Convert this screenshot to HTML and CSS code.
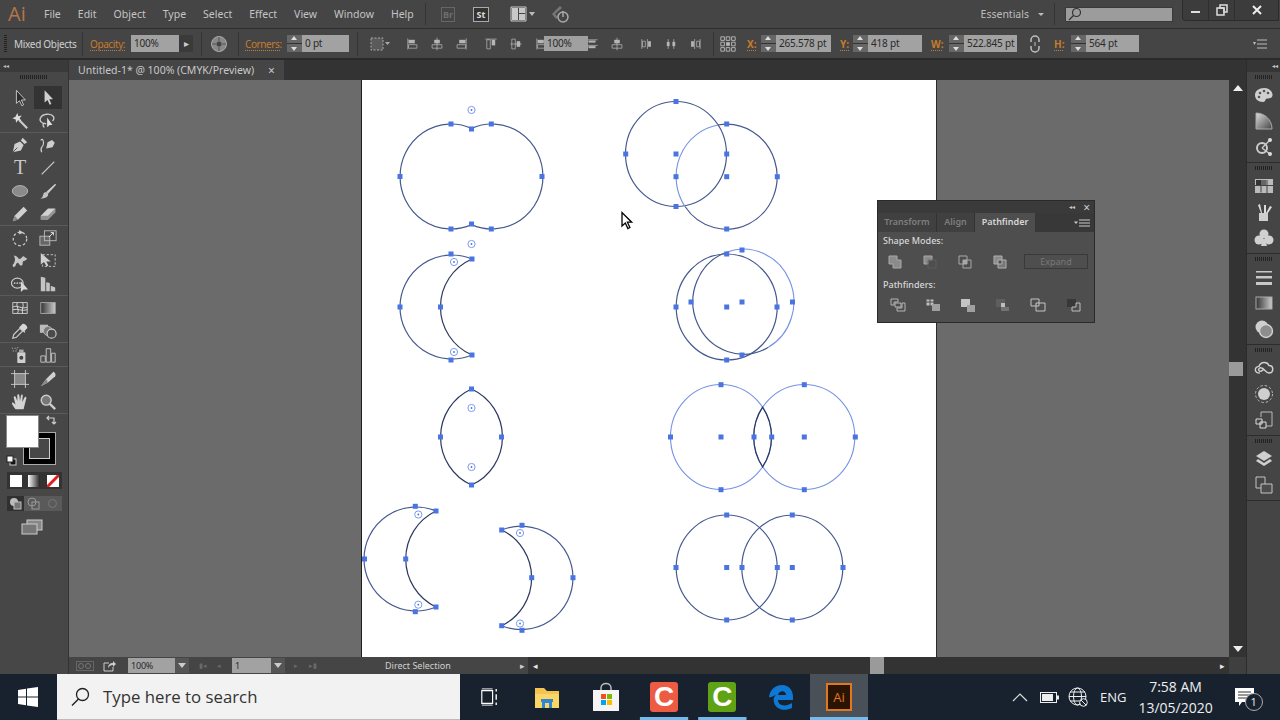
FILE: index.html
```html
<!DOCTYPE html>
<html lang="en">
<head>
    <meta charset="UTF-8">
    <title>Illustrator - Pathfinder</title>
    <link rel="stylesheet" href="styles.css">
</head>
<body>
<!-- icon sprite -->
<svg class="sprite" xmlns="http://www.w3.org/2000/svg">
    <symbol id="t-sel" viewBox="0 0 20 20"><path d="M6 1.500V16l3.400-3 2.600 5.600 2-1-2.500-5.400H16z" fill="#2c2c2c" stroke="#cfcfcf"/></symbol>
    <symbol id="t-dsel" viewBox="0 0 20 20"><path d="M6 1.500V16l3.400-3 2.600 5.600 2-1-2.500-5.400H16z" fill="#cfcfcf"/></symbol>
    <symbol id="t-wand" viewBox="0 0 20 20"><path d="M9 9l9 9" stroke="#ccc" stroke-width="2.400"/><path d="M7 1l1.200 3.600L12 4 9.600 7l2 3-3.600-1L5.600 12 5.200 8.200 1.500 7l3.500-1.600z" fill="#ddd"/></symbol>
    <symbol id="t-lasso" viewBox="0 0 20 20"><path d="M8 13C2 13 0 9 2 6c2-4 11-5 14-1 1 2 0 4-1 5" fill="none" stroke="#ccc" stroke-width="1.500"/><path d="M6 12c-2 1-2 4 0 5" fill="none" stroke="#ccc" stroke-width="1.500"/><path d="M9 6v11l3-2.500 3 0z" fill="#ddd"/></symbol>
    <symbol id="t-pen" viewBox="0 0 20 20"><path d="M2 18l2-9 6-3 4 4-3 6zM11 5l2-3 5 5-3 2z" fill="#cfcfcf"/><path d="M2 18l5-5" stroke="#444"/></symbol>
    <symbol id="t-curve" viewBox="0 0 20 20"><path d="M7 17l1.500-7 5-2.500 3 3-2.500 5z" fill="#cfcfcf" transform="translate(1 -3)"/><path d="M3 18C0 12 5 13 5 8s-2-5-3-3" fill="none" stroke="#ccc" stroke-width="1.300"/></symbol>
    <symbol id="t-line" viewBox="0 0 20 20"><path d="M3 17L17 3" stroke="#ccc" stroke-width="1.300"/></symbol>
    <symbol id="t-ellipse" viewBox="0 0 20 20"><ellipse cx="10" cy="10" rx="8.500" ry="6" fill="#8b8b8b" stroke="#bbb"/></symbol>
    <symbol id="t-brush" viewBox="0 0 20 20"><path d="M8 11L18 2l1 1-9 10z" fill="#d0d0d0"/><path d="M1 18c3 0 3-2 4-5 1-2 4-2 5 0 1 3-3 6-9 5z" fill="#c4c4c4"/></symbol>
    <symbol id="t-pencil" viewBox="0 0 20 20"><path d="M2 18l2-6L14 2l4 4L8 16z" fill="#cfcfcf"/><path d="M2 18l2-6 4 4z" fill="#8a8a8a"/></symbol>
    <symbol id="t-eraser" viewBox="0 0 20 20"><path d="M2 12l8-8h8v4l-8 8H2z" fill="#d2d2d2"/><path d="M2 12h8v4H2zM10 12l8-8v4l-8 8z" fill="#929292"/></symbol>
    <symbol id="t-rotate" viewBox="0 0 20 20"><circle cx="10" cy="11" r="7.500" fill="none" stroke="#ccc" stroke-width="1.400" stroke-dasharray="3 2.400"/><path d="M9 1l5 3-5 2z" fill="#ccc"/></symbol>
    <symbol id="t-scale" viewBox="0 0 20 20"><rect x="1" y="8" width="11" height="10" fill="#666" stroke="#bbb"/><rect x="6" y="2" width="13" height="11" fill="none" stroke="#bbb"/><path d="M11 9l5-5m-3 0h3v3" fill="none" stroke="#eee"/></symbol>
    <symbol id="t-warp" viewBox="0 0 20 20"><path d="M3 17c3-1 2-4 4-5s2 4 5 3c2-1 0-4 2-5 2 0 3-1 4-3-3 0-3-3-5-2-2 2-3 4-5 2-1-2-3-3-5-3 2 3 2 6 0 9-2 1-1 3 0 4z" fill="#c6c6c6"/></symbol>
    <symbol id="t-free" viewBox="0 0 20 20"><path d="M4 3h14v13H4z" fill="none" stroke="#ccc" stroke-dasharray="2.500 2"/><path d="M2 1v13l3.500-3 3 5 2-1-2.500-4.500H13z" fill="#d0d0d0"/></symbol>
    <symbol id="t-builder" viewBox="0 0 20 20"><ellipse cx="7" cy="9" rx="6.500" ry="5.500" fill="none" stroke="#ccc" stroke-width="1.300"/><circle cx="4" cy="9" r="1" fill="#ccc"/><circle cx="7" cy="9" r="1" fill="#ccc"/><circle cx="10" cy="9" r="1" fill="#ccc"/><path d="M11 7v12l3-3h5z" fill="#d8d8d8"/></symbol>
    <symbol id="t-persp" viewBox="0 0 20 20"><path d="M2 2l5 1v15H2zM8 8l4 1v9H8zM13 12l5 2v4h-5z" fill="#c4c4c4"/></symbol>
    <symbol id="t-mesh" viewBox="0 0 20 20"><rect x="2" y="4" width="16" height="12" fill="#4a4a4a" stroke="#d0d0d0"/><path d="M2 9c5-3 10 3 16 0M2 12c5-2 10 2 16 0M7 4c-2 4 3 8 0 12M13 4c2 4-2 8 0 12" fill="none" stroke="#e0e0e0"/></symbol>
    <symbol id="t-grad" viewBox="0 0 20 20"><defs><linearGradient id="g-tool"><stop offset="0" stop-color="#333"/><stop offset="1" stop-color="#ccc"/></linearGradient></defs><rect x="2" y="4" width="16" height="12" fill="url(#g-tool)" stroke="#aaa"/></symbol>
    <symbol id="t-drop" viewBox="0 0 20 20"><path d="M2 18l1-4 7-7 3 3-7 7z" fill="none" stroke="#ccc" stroke-width="1.300"/><path d="M10 5l3-3c2-1 6 3 5 5l-3 3 1 1-1 1-6-6 1-1z" fill="#d6d6d6"/></symbol>
    <symbol id="t-blend" viewBox="0 0 20 20"><rect x="1" y="3" width="9" height="9" fill="#bbb"/><circle cx="10" cy="10" r="5" fill="#777" stroke="#bbb"/><circle cx="14" cy="13" r="5" fill="#4b4b4b" stroke="#ccc" stroke-width="1.300"/></symbol>
    <symbol id="t-spray" viewBox="0 0 20 20"><rect x="7" y="7" width="9" height="12" rx="1" fill="#cfcfcf"/><rect x="9" y="4" width="5" height="3" fill="#aaa"/><circle cx="11.500" cy="13" r="2.200" fill="#444"/><path d="M1 2h1v1H1zM4 2h1v1H4zM6 3h1v1H6zM2 5h1v1H2zM5 5h1v1H5zM7 1h1v1H7z" fill="#ccc"/></symbol>
    <symbol id="t-graph" viewBox="0 0 20 20"><path d="M2 11h5v7H2zM8 3h5v15H8zM14 8h4v10h-4z" fill="#4d4d4d" stroke="#c8c8c8"/></symbol>
    <symbol id="t-artboard" viewBox="0 0 20 20"><rect x="4" y="4" width="12" height="12" fill="#888"/><path d="M0 4h20M0 16h20M4 0v20M16 0v20" stroke="#ccc"/></symbol>
    <symbol id="t-slice" viewBox="0 0 20 20"><path d="M2 18l6-8 8-8c2 1 3 3 2 5l-8 7z" fill="#d0d0d0"/><path d="M2 18l6-8 2 4z" fill="#888"/></symbol>
    <symbol id="t-hand" viewBox="0 0 20 20"><path d="M5 18C3 15 1 13 1 11c1-1 2 0 4 2L3 5c0-2 2-2 2.500 0L7 9 7 3c0-2 2-2 2.300 0L10 9l1-6c.5-2 2.500-1.500 2 .5L12.500 10l2.500-5c1-1.500 2.500-.5 2 1l-2 8-1 4z" fill="#d4d4d4"/></symbol>
    <symbol id="t-zoom" viewBox="0 0 20 20"><circle cx="8" cy="8" r="5.500" fill="#777" stroke="#ccc" stroke-width="1.600"/><path d="M12 12l6 6" stroke="#ccc" stroke-width="2.600"/></symbol>
    <symbol id="a-left" viewBox="0 0 20 20"><path d="M4 2v16" stroke="#bbb"/><path d="M5 4h9v5H5z" fill="#b5b5b5"/><path d="M5 11h12v5H5z" fill="none" stroke="#bbb"/></symbol>
    <symbol id="a-center" viewBox="0 0 20 20"><path d="M10 1v18" stroke="#bbb"/><path d="M6 4h8v5H6z" fill="#b5b5b5"/><path d="M3 11h14v5H3z" fill="none" stroke="#bbb"/></symbol>
    <symbol id="a-right" viewBox="0 0 20 20"><path d="M16 2v16" stroke="#bbb"/><path d="M6 4h9v5H6z" fill="#b5b5b5"/><path d="M3 11h12v5H3z" fill="none" stroke="#bbb"/></symbol>
    <symbol id="a-top" viewBox="0 0 20 20"><path d="M2 3h16" stroke="#bbb"/><path d="M11 4h5v8h-5z" fill="#b5b5b5"/><path d="M4 4h5v13H4z" fill="none" stroke="#bbb"/></symbol>
    <symbol id="a-mid" viewBox="0 0 20 20"><path d="M2 10h16" stroke="#bbb"/><path d="M11 6h5v8h-5z" fill="#b5b5b5"/><path d="M4 3h5v14H4z" fill="none" stroke="#bbb"/></symbol>
    <symbol id="a-dtop" viewBox="0 0 20 20"><path d="M2 4h16M2 12h16" stroke="#bbb"/><path d="M5 5h10v3H5z" fill="#b5b5b5"/><path d="M5 13h10v3H5z" fill="#b5b5b5"/></symbol>
    <symbol id="a-dleft" viewBox="0 0 20 20"><path d="M4 3v14M12 3v14" stroke="#bbb"/><path d="M5 6h4v8H5z" fill="none" stroke="#bbb"/><path d="M13 6h4v8h-4z" fill="#b5b5b5"/></symbol>
    <symbol id="a-dmid" viewBox="0 0 20 20"><path d="M6 3v14M14 3v14" stroke="#bbb"/><path d="M4 7h4v6H4z" fill="#b5b5b5"/><path d="M12 7h4v6h-4z" fill="#b5b5b5"/></symbol>
    <symbol id="a-dright" viewBox="0 0 20 20"><path d="M8 3v14M16 3v14" stroke="#bbb"/><path d="M3 6h4v8H3z" fill="#b5b5b5"/><path d="M11 6h4v8h-4z" fill="none" stroke="#bbb"/></symbol>
    <symbol id="c-refpoint" viewBox="0 0 20 20"><path d="M2 2h4v4H2zM8 2h4v4H8zM14 2h4v4h-4zM2 8h4v4H2zM14 8h4v4h-4zM2 14h4v4H2zM8 14h4v4H8zM14 14h4v4h-4z" fill="none" stroke="#bbb"/><path d="M8 8h4v4H8z" fill="#bbb"/></symbol>
    <symbol id="p-unite" viewBox="0 0 14 14"><path d="M1 1h8v4h4v8H5V9H1z" fill="#8b8b8b" stroke="#a8a8a8"/></symbol>
    <symbol id="p-minus" viewBox="0 0 14 14"><path d="M1 1h8v4H5v4H1z" fill="#8b8b8b" stroke="#a8a8a8"/><path d="M5 5h8v8H5z" fill="none" stroke="#5c5c5c"/></symbol>
    <symbol id="p-inter" viewBox="0 0 14 14"><path d="M1 1h8v8H1zM5 5h8v8H5z" fill="none" stroke="#a8a8a8"/><path d="M5 5h4v4H5z" fill="#a8a8a8"/></symbol>
    <symbol id="p-excl" viewBox="0 0 14 14"><path d="M1 1h8v4H5v4H1z" fill="#8b8b8b"/><path d="M9 5h4v8H5V9h4z" fill="#777"/><path d="M1 1h8v8H1zM5 5h8v8H5z" fill="none" stroke="#b0b0b0"/></symbol>
    <symbol id="p-divide" viewBox="0 0 16 14"><path d="M1 1h7v3H4v3H1zM5 5h6v4H5zM12 5h3v8H7v-3h5z" fill="none" stroke="#b4b4b4"/></symbol>
    <symbol id="p-trim" viewBox="0 0 16 14"><path d="M1 1h8v7H1z" fill="#c0c0c0" stroke="#4c4c4c"/><path d="M5 1v7M1 4h8" stroke="#4c4c4c"/><path d="M7 6h8v7H7z" fill="#a0a0a0"/></symbol>
    <symbol id="p-merge" viewBox="0 0 16 14"><path d="M1 1h9v8H1z" fill="#c4c4c4"/><path d="M7 7h8v7H7z" fill="#a0a0a0"/></symbol>
    <symbol id="p-crop" viewBox="0 0 16 14"><path d="M1 1h9v8H1z" fill="#5e5e5e"/><path d="M6 5h4v4H6z" fill="#bdbdbd"/><path d="M6 9h8v4H6z" fill="#727272"/></symbol>
    <symbol id="p-outline" viewBox="0 0 16 14"><path d="M1 1h8v7H1zM6 5h9v8H6z" fill="none" stroke="#c4c4c4"/></symbol>
    <symbol id="p-back" viewBox="0 0 16 14"><path d="M2 1h9v8H2z" fill="#383838"/><path d="M11 5v4H7v4h8V5z" fill="none" stroke="#bdbdbd"/></symbol>
    <symbol id="d-palette" viewBox="0 0 20 20"><path d="M10 3C5 3 1 6 1 10s3 7 8 7c2 0 2-2 3-3s4 0 6-2c2-4-2-9-8-9z" fill="#d0d0d0"/><circle cx="6" cy="8" r="1.300" fill="#555"/><circle cx="10" cy="6" r="1.300" fill="#555"/><circle cx="14" cy="8" r="1.300" fill="#555"/><circle cx="5" cy="12" r="1.300" fill="#555"/></symbol>
    <symbol id="d-quarter" viewBox="0 0 20 20"><defs><linearGradient id="g-dock" x1="0" y1="0" x2="1" y2="1"><stop offset="0" stop-color="#ddd"/><stop offset="1" stop-color="#444"/></linearGradient></defs><path d="M2 2c9 0 16 7 16 16H2z" fill="url(#g-dock)" stroke="#aaa"/></symbol>
    <symbol id="d-cc" viewBox="0 0 20 20"><circle cx="8" cy="11" r="5" fill="none" stroke="#ccc" stroke-width="2"/><path d="M8 11l8-8M8 11l8 6" stroke="#ccc" stroke-width="1.300"/><circle cx="16" cy="3" r="2" fill="#ddd"/><circle cx="16" cy="17" r="2" fill="#ddd"/></symbol>
    <symbol id="d-swatch" viewBox="0 0 20 20"><rect x="1" y="3" width="18" height="14" fill="#bbb"/><path d="M2 4h5v5H2z" fill="#333"/><path d="M7 4h5v5H7z" fill="#666"/><path d="M7 9.500v7M13 4v13M1 9.500h18" stroke="#444"/></symbol>
    <symbol id="d-brushes" viewBox="0 0 20 20"><path d="M5 11h9v8H5z" fill="#cfcfcf"/><path d="M7 11L4 3l2-1 2 9M10 11V3h2v8M12 11l4-7 2 1-4 6" fill="#dcdcdc"/></symbol>
    <symbol id="d-club" viewBox="0 0 20 20"><circle cx="10" cy="6" r="4.500" fill="#d0d0d0"/><circle cx="5" cy="12" r="4.500" fill="#d0d0d0"/><circle cx="15" cy="12" r="4.500" fill="#d0d0d0"/><path d="M9 11h2l2 7H7z" fill="#d0d0d0"/></symbol>
    <symbol id="d-stroke" viewBox="0 0 20 20"><path d="M2 4h16v1.500H2zM2 9h16v2.500H2zM2 15h16v3H2z" fill="#c8c8c8"/></symbol>
    <symbol id="d-gradient" viewBox="0 0 20 20"><rect x="2" y="4" width="16" height="12" fill="url(#g-tool)" stroke="#aaa"/></symbol>
    <symbol id="d-appear" viewBox="0 0 20 20"><circle cx="8" cy="8" r="6.500" fill="#cfcfcf"/><circle cx="12" cy="12" r="6.500" fill="#8d8d8d" stroke="#d0d0d0" stroke-width="1.400"/></symbol>
    <symbol id="d-cloud" viewBox="0 0 24 20"><path d="M7 16c-7 0-7-7-1-8 2-6 10-6 12-1 6 0 6 9 0 9-4 0-6-6-9-6-3-1-5 3-2 4 2 0 3-1 4-2" fill="none" stroke="#d0d0d0" stroke-width="1.700"/></symbol>
    <symbol id="d-sun" viewBox="0 0 20 20"><circle cx="10" cy="10" r="8.500" fill="none" stroke="#bbb" stroke-dasharray="2.500 2"/><circle cx="10" cy="10" r="6" fill="#cfcfcf"/></symbol>
    <symbol id="d-trans" viewBox="0 0 20 20"><path d="M7 7V2h11v14h-6" fill="none" stroke="#bbb"/><path d="M2 9h6v5H2z" fill="none" stroke="#ddd"/><path d="M6 12h6v6H6z" fill="none" stroke="#ddd"/></symbol>
    <symbol id="d-layers" viewBox="0 0 20 20"><path d="M10 2l8 5-8 5-8-5z" fill="#cfcfcf"/><path d="M4 10l6 4 6-4 2 2-8 5-8-5z" fill="#cfcfcf"/></symbol>
    <symbol id="d-boards" viewBox="0 0 20 20"><path d="M2 2h9v11H2z" fill="none" stroke="#c4c4c4"/><path d="M7 9h11v9H7z" fill="#4c4c4c" stroke="#c4c4c4"/></symbol>
</svg>

<div class="app">
    <header class="menubar">
        <span class="ai-logo">Ai</span>
        <nav class="menu">
            <span>File</span><span>Edit</span><span>Object</span><span>Type</span><span>Select</span><span>Effect</span><span>View</span><span>Window</span><span>Help</span>
        </nav>
        <i class="vsep vsep-menu"></i>
        <span class="badge badge-br">Br</span>
        <span class="badge badge-st">St</span>
        <svg class="layout-ic" width="25" height="16" viewBox="0 0 25 16"><path d="M1 1h15v14H1z" fill="none" stroke="#ccc"/><path d="M2 2h6v12H2zM9 2h6v5H9zM9 8h6v6H9z" fill="#c8c8c8"/><path d="M19 6h6l-3 4z" fill="#bbb"/></svg>
        <svg class="sync-ic" width="20" height="20" viewBox="0 0 20 20"><path d="M1 10l8-8 2 2-7 6 3 3-2 2z" fill="#777"/><circle cx="12" cy="13" r="5" fill="none" stroke="#aaa" stroke-width="1.500"/><path d="M12 7v6" stroke="#aaa" stroke-width="1.500"/></svg>
        <span class="essentials">Essentials</span>
        <i class="caret"></i>
        <i class="vsep vsep-ess"></i>
        <div class="search-box">
            <svg width="14" height="14" viewBox="0 0 14 14"><circle cx="8.500" cy="5.500" r="4" fill="none" stroke="#333" stroke-width="1.200"/><path d="M5.500 8.500L1 13" stroke="#333" stroke-width="1.300"/></svg>
        </div>
        <div class="win-btns">
            <span class="win-btn win-min"><i></i></span>
            <span class="win-btn win-max"><svg width="12" height="12" viewBox="0 0 12 12"><path d="M4 1h7v7H8V4H4z" fill="none" stroke="#ddd" stroke-width="1.500"/><path d="M1 4h7v7H1z" fill="none" stroke="#ddd" stroke-width="1.500"/></svg></span>
            <span class="win-btn win-close"><svg width="12" height="12" viewBox="0 0 12 12"><path d="M2 2l8 8M10 2l-8 8" stroke="#eee" stroke-width="2"/></svg></span>
        </div>
    </header>

    <div class="controlbar">
        <i class="grip"></i>
        <span class="cb-title">Mixed Objects</span>
        <i class="vsep vsep-1"></i>
        <span class="lbl lbl-opacity">Opacity:</span>
        <span class="field f-opacity">100%</span>
        <span class="field-arrow">&#9656;</span>
        <i class="vsep vsep-2"></i>
        <svg class="ic-style" width="18" height="18" viewBox="0 0 18 18"><circle cx="9" cy="9" r="7.500" fill="#888" stroke="#aaa"/><circle cx="9" cy="9" r="2.500" fill="#444"/><path d="M9 2v4M9 12v4M2 9h4M12 9h4" stroke="#555"/></svg>
        <i class="vsep vsep-3"></i>
        <span class="lbl lbl-corners">Corners:</span>
        <span class="stepper st-corners"></span>
        <span class="field f-corners">0 pt</span>
        <i class="vsep vsep-4"></i>
        <svg class="ic-shape" width="21" height="18" viewBox="0 0 21 18"><rect x="2" y="3" width="12" height="12" fill="#5a5a5a" stroke="#aaa" stroke-dasharray="2 1.500"/><path d="M16 7h5l-2.500 3z" fill="#aaa"/></svg>
        <div class="align-row">
            <svg><use href="#a-left"/></svg><svg><use href="#a-center"/></svg><svg><use href="#a-right"/></svg>
            <svg class="gap-l"><use href="#a-top"/></svg><svg><use href="#a-mid"/></svg><svg><use href="#a-left"/></svg>
            <svg class="gap-m"><use href="#a-dtop"/></svg><svg><use href="#a-center"/></svg>
            <svg class="gap-l"><use href="#a-dleft"/></svg><svg><use href="#a-dmid"/></svg><svg><use href="#a-dright"/></svg>
            <span class="field f-overlay">100%</span>
        </div>
        <i class="vsep vsep-5"></i>
        <svg class="ic-ref" width="18" height="20"><use href="#c-refpoint"/></svg>
        <span class="lbl lbl-x">X:</span>
        <span class="stepper"></span>
        <span class="field f-x">265.578 pt</span>
        <span class="lbl lbl-y">Y:</span>
        <span class="stepper"></span>
        <span class="field f-y">418 pt</span>
        <span class="lbl lbl-w">W:</span>
        <span class="stepper"></span>
        <span class="field f-w">522.845 pt</span>
        <svg class="ic-link" width="14" height="18" viewBox="0 0 14 18"><path d="M3 7V5a4 4 0 0 1 8 0v2M3 11v2a4 4 0 0 0 8 0v-2" fill="none" stroke="#c0c0c0" stroke-width="1.500"/><path d="M7 7v4" stroke="#c0c0c0"/></svg>
        <span class="lbl lbl-h">H:</span>
        <span class="stepper"></span>
        <span class="field f-h">564 pt</span>
        <svg class="ic-cbmenu" width="14" height="10" viewBox="0 0 14 10"><path d="M4 1h10M4 5h10M4 9h10" stroke="#bbb"/><path d="M0 3h3L1.500 6z" fill="#bbb"/></svg>
    </div>

    <div class="main">
        <aside class="tools">
            <div class="tools-head">&#9666;&#9666;</div>
            <div class="tools-grip"></div>
            <div class="tool-grp">
                <svg><use href="#t-sel"/></svg><svg class="on"><use href="#t-dsel"/></svg>
                <svg><use href="#t-wand"/></svg><svg><use href="#t-lasso"/></svg>
            </div>
            <div class="tool-grp">
                <svg><use href="#t-pen"/></svg><svg><use href="#t-curve"/></svg>
                <span class="type-tool">T</span><svg><use href="#t-line"/></svg>
                <svg><use href="#t-ellipse"/></svg><svg><use href="#t-brush"/></svg>
                <svg><use href="#t-pencil"/></svg><svg><use href="#t-eraser"/></svg>
            </div>
            <div class="tool-grp">
                <svg><use href="#t-rotate"/></svg><svg><use href="#t-scale"/></svg>
                <svg><use href="#t-warp"/></svg><svg><use href="#t-free"/></svg>
                <svg><use href="#t-builder"/></svg><svg><use href="#t-persp"/></svg>
            </div>
            <div class="tool-grp">
                <svg><use href="#t-mesh"/></svg><svg><use href="#t-grad"/></svg>
                <svg><use href="#t-drop"/></svg><svg><use href="#t-blend"/></svg>
            </div>
            <div class="tool-grp">
                <svg><use href="#t-spray"/></svg><svg><use href="#t-graph"/></svg>
            </div>
            <div class="tool-grp">
                <svg><use href="#t-artboard"/></svg><svg><use href="#t-slice"/></svg>
                <svg><use href="#t-hand"/></svg><svg><use href="#t-zoom"/></svg>
            </div>
            <div class="colors">
                <div class="stroke-box"><i></i></div>
                <div class="fill-box"></div>
                <svg class="swap" width="11" height="11" viewBox="0 0 11 11"><path d="M1 3h7v6M3 1L1 3l2 2M6 7l2 2 2-2" fill="none" stroke="#ccc" stroke-width="1.200"/></svg>
                <svg class="defaults" width="11" height="11" viewBox="0 0 11 11"><rect x="4" y="4" width="6" height="6" fill="#111" stroke="#ccc"/><rect x="1" y="1" width="6" height="6" fill="#fff" stroke="#222"/></svg>
            </div>
            <div class="mode-row">
                <i class="mode mode-color"></i><i class="mode mode-grad"></i>
                <svg class="mode mode-none" viewBox="0 0 12 12"><rect width="12" height="12" fill="#fff"/><path d="M0 12L12 0" stroke="#e02020" stroke-width="3"/></svg>
            </div>
            <div class="draw-row">
                <span class="draw-on"><svg width="13" height="13" viewBox="0 0 13 13"><circle cx="5" cy="5" r="4" fill="#bbb"/><rect x="5" y="5" width="7" height="7" fill="#777" stroke="#bbb"/></svg></span>
                <span class="draw-off"><svg width="13" height="13" viewBox="0 0 13 13"><circle cx="5" cy="5" r="4" fill="none" stroke="#999"/><rect x="5" y="5" width="7" height="7" fill="none" stroke="#999"/></svg><svg width="13" height="13" viewBox="0 0 13 13"><circle cx="6.500" cy="6.500" r="4" fill="none" stroke="#777"/></svg></span>
            </div>
            <svg class="screen-ic" width="22" height="16" viewBox="0 0 22 16"><rect x="6" y="1" width="15" height="10" fill="#888" stroke="#ccc"/><rect x="1" y="5" width="15" height="10" fill="#777" stroke="#ccc"/></svg>
        </aside>

        <div class="doc">
            <div class="tabstrip">
                <div class="tab"><span>Untitled-1* @ 100% (CMYK/Preview)</span><b>&#215;</b></div>
            </div>
            <div class="doc-body">
                <div class="canvas">
                    <div class="artboard">
                        <svg class="shapes" width="574" height="577" viewBox="362 80 574 577">
                            <defs>
                                <rect id="p" x="-2.500" y="-2.500" width="5" height="5"/>
                                <g id="w"><circle r="3.600" class="w-ring"/><circle r="0.900" class="w-dot"/></g>
                            </defs>

                            <!-- unite -->
                            <path class="ol" d="M471.500 128.400A51 52.500 0 1 0 471.500 224.600A51 52.500 0 1 0 471.500 128.400Z"/>
                            <!-- two circles, top right -->
                            <ellipse class="ol" cx="676" cy="154" rx="50.500" ry="52.500"/>
                            <path class="ol" d="M685 206.500A50.500 52.500 0 1 0 718 125"/>
                            <path class="lt" d="M718 125A50.500 52.500 0 0 0 685 206.500"/>
                            <!-- crescent -->
                            <path class="ol" d="M472 259A52 52 0 1 0 472 355"/>
                            <path class="dk" d="M472 355A52.300 52.300 0 0 1 472 259"/>
                            <!-- offset circles -->
                            <ellipse class="ol" cx="726.700" cy="307" rx="50.500" ry="53"/>
                            <path class="ol" d="M727 252A50.500 52.500 0 1 0 768 347.500"/>
                            <path class="lt" d="M727 252A50.500 52.500 0 0 1 768 347.500"/>
                            <!-- intersect -->
                            <path class="dk" d="M471.500 389A52.700 52.700 0 0 1 471.500 485A52.700 52.700 0 0 1 471.500 389Z"/>
                            <!-- row 3 pair -->
                            <ellipse class="lt" cx="721" cy="437" rx="50.500" ry="52.500"/>
                            <ellipse class="lt" cx="804.300" cy="437" rx="50.500" ry="52.500"/>
                            <path class="dk" d="M762.600 407.200A50.500 52.500 0 0 1 762.600 466.800A50.500 52.500 0 0 1 762.600 407.200Z"/>
                            <!-- bottom crescents -->
                            <path class="ol" d="M436 511A52 52 0 1 0 436 607"/>
                            <path class="dk" d="M436 607A53.200 53.200 0 0 1 436 511"/>
                            <path class="ol" d="M501.700 530A51.700 51.700 0 1 1 501.700 625.700"/>
                            <path class="dk" d="M501.700 625.700A53.200 53.200 0 0 0 501.700 530"/>
                            <!-- row 4 pair -->
                            <ellipse class="ol" cx="726.700" cy="567.500" rx="50.500" ry="52.500"/>
                            <ellipse class="ol" cx="792.300" cy="567.500" rx="50.500" ry="52.500"/>

                            <!-- anchor points -->
                            <g class="pts">
                                <use href="#p" x="400" y="176.500"/><use href="#p" x="451" y="124"/><use href="#p" x="491.300" y="124"/><use href="#p" x="471.500" y="129"/><use href="#p" x="542" y="176.500"/><use href="#p" x="451" y="229"/><use href="#p" x="491.300" y="229"/><use href="#p" x="471.500" y="224"/>
                                <use href="#p" x="625.700" y="154"/><use href="#p" x="676" y="101.500"/><use href="#p" x="676" y="154"/><use href="#p" x="726.700" y="154"/><use href="#p" x="676" y="206.500"/><use href="#p" x="676" y="176.700"/><use href="#p" x="726.700" y="124"/><use href="#p" x="726.700" y="176.700"/><use href="#p" x="777.300" y="176.700"/><use href="#p" x="726.700" y="229"/>
                                <use href="#p" x="400" y="307"/><use href="#p" x="451" y="254"/><use href="#p" x="451" y="360"/><use href="#p" x="472" y="259"/><use href="#p" x="472" y="355"/><use href="#p" x="440.500" y="307"/>
                                <use href="#p" x="676" y="307"/><use href="#p" x="726.700" y="254"/><use href="#p" x="726.700" y="307"/><use href="#p" x="777" y="307"/><use href="#p" x="726.700" y="360"/><use href="#p" x="742" y="250"/><use href="#p" x="691" y="302"/><use href="#p" x="742" y="302"/><use href="#p" x="792.500" y="302"/><use href="#p" x="742" y="355"/>
                                <use href="#p" x="471.500" y="389"/><use href="#p" x="471.500" y="485"/><use href="#p" x="440.500" y="437"/><use href="#p" x="501.500" y="437"/>
                                <use href="#p" x="670.500" y="437"/><use href="#p" x="721" y="384.700"/><use href="#p" x="721" y="437"/><use href="#p" x="771.700" y="437"/><use href="#p" x="721" y="489.700"/><use href="#p" x="754" y="437"/><use href="#p" x="804.300" y="384.700"/><use href="#p" x="804.300" y="437"/><use href="#p" x="855.300" y="437"/><use href="#p" x="804.300" y="489.700"/>
                                <use href="#p" x="364.500" y="559"/><use href="#p" x="415.300" y="506.300"/><use href="#p" x="415.300" y="611.700"/><use href="#p" x="436" y="511"/><use href="#p" x="436" y="607"/><use href="#p" x="405.700" y="559"/>
                                <use href="#p" x="501.700" y="530"/><use href="#p" x="501.700" y="625.700"/><use href="#p" x="522" y="525.300"/><use href="#p" x="522" y="630.300"/><use href="#p" x="531.700" y="577.700"/><use href="#p" x="573" y="577.700"/>
                                <use href="#p" x="676" y="567.500"/><use href="#p" x="726.700" y="515"/><use href="#p" x="726.700" y="567.500"/><use href="#p" x="777.300" y="567.500"/><use href="#p" x="726.700" y="620"/><use href="#p" x="742" y="567.500"/><use href="#p" x="792.300" y="515"/><use href="#p" x="792.300" y="567.500"/><use href="#p" x="843" y="567.500"/><use href="#p" x="792.300" y="620"/>
                            </g>

                            <!-- live corner widgets -->
                            <use href="#w" x="471.500" y="110"/>
                            <use href="#w" x="471.500" y="244"/>
                            <use href="#w" x="454" y="262"/>
                            <use href="#w" x="454" y="352"/>
                            <use href="#w" x="471.500" y="408"/>
                            <use href="#w" x="471.500" y="467"/>
                            <use href="#w" x="418.300" y="514.500"/>
                            <use href="#w" x="418.300" y="604.700"/>
                            <use href="#w" x="520" y="533"/>
                            <use href="#w" x="520" y="623.500"/>

                            <path class="cursor" d="M622 212.500V226l3.300-3 2.600 5.500 2-1-2.500-5.300h4.300z"/>
                        </svg>
                    </div>

                    <section class="panel">
                        <div class="panel-top">
                            <span>&#9666;&#9666;</span><b>&#215;</b>
                        </div>
                        <div class="panel-tabs">
                            <span class="ptab ptab-a">Transform</span>
                            <span class="ptab ptab-b">Align</span>
                            <span class="ptab ptab-on">Pathfinder</span>
                            <svg class="ptab-menu" width="16" height="8" viewBox="0 0 16 8"><path d="M5 1h11M5 4h11M5 7h11" stroke="#ccc"/><path d="M0 2.500h4L2 5z" fill="#ccc"/></svg>
                        </div>
                        <div class="panel-body">
                            <div class="p-title">Shape Modes:</div>
                            <div class="modes">
                                <svg><use href="#p-unite"/></svg>
                                <svg><use href="#p-minus"/></svg>
                                <svg><use href="#p-inter"/></svg>
                                <svg><use href="#p-excl"/></svg>
                                <span class="expand">Expand</span>
                            </div>
                            <div class="p-title p-title2">Pathfinders:</div>
                            <div class="finders">
                                <svg><use href="#p-divide"/></svg>
                                <svg><use href="#p-trim"/></svg>
                                <svg><use href="#p-merge"/></svg>
                                <svg><use href="#p-crop"/></svg>
                                <svg><use href="#p-outline"/></svg>
                                <svg><use href="#p-back"/></svg>
                            </div>
                        </div>
                    </section>
                </div>
                <div class="vscroll">
                    <i class="arr-up"></i>
                    <i class="vthumb"></i>
                    <i class="arr-down"></i>
                </div>
            </div>
            <div class="statusbar">
                <svg class="st-rot" width="18" height="10" viewBox="0 0 18 10"><rect x="0.500" y="0.500" width="17" height="9" fill="none" stroke="#666"/><circle cx="5" cy="5" r="2.500" fill="none" stroke="#777"/><circle cx="12" cy="5" r="2.500" fill="none" stroke="#777"/></svg>
                <svg class="st-share" width="13" height="12" viewBox="0 0 13 12"><path d="M1 3h5M1 3v8h9V7" fill="none" stroke="#ccc"/><path d="M5 8c0-3 2-5 5-5V1l3 3-3 3V5c-2 0-4 1-5 3z" fill="#ccc"/></svg>
                <span class="field f-zoom">100%</span>
                <span class="drop"></span>
                <span class="nav nav-a">&#9646;&#9666;</span>
                <span class="nav nav-b">&#9666;</span>
                <span class="field f-page">1</span>
                <span class="drop"></span>
                <span class="nav nav-c">&#9656;</span>
                <span class="nav nav-d">&#9656;&#9646;</span>
                <span class="st-text">Direct Selection</span>
                <span class="st-arrow">&#9656;</span>
                <div class="hscroll">
                    <span class="h-left">&#9666;</span>
                    <i class="hthumb"></i>
                    <span class="h-right">&#9656;</span>
                </div>
                <i class="corner"></i>
            </div>
        </div>

        <aside class="dock">
            <div class="dock-head">&#9666;&#9666;</div>
            <div class="dock-grp">
                <i class="dock-grip"></i>
                <svg><use href="#d-palette"/></svg><svg><use href="#d-quarter"/></svg><svg><use href="#d-cc"/></svg>
            </div>
            <div class="dock-grp">
                <i class="dock-grip"></i>
                <svg><use href="#d-swatch"/></svg><svg><use href="#d-brushes"/></svg><svg><use href="#d-club"/></svg>
            </div>
            <div class="dock-grp">
                <i class="dock-grip"></i>
                <svg><use href="#d-stroke"/></svg><svg><use href="#d-gradient"/></svg><svg><use href="#d-appear"/></svg>
            </div>
            <div class="dock-grp">
                <i class="dock-grip"></i>
                <svg><use href="#d-cloud"/></svg><svg><use href="#d-sun"/></svg><svg><use href="#d-trans"/></svg>
            </div>
            <div class="dock-grp">
                <i class="dock-grip"></i>
                <svg><use href="#d-layers"/></svg><svg><use href="#d-boards"/></svg>
            </div>
        </aside>
    </div>

    <footer class="taskbar">
        <svg class="win-logo" width="20" height="20" viewBox="0 0 20 20"><path d="M0 3l8-1.200V9.500H0zM9 1.600L20 0v9.500H9zM0 10.500h8v7.700L0 17zM9 10.500h11V20L9 18.400z" fill="#fff"/></svg>
        <div class="tb-search">
            <svg width="19" height="19" viewBox="0 0 19 19"><circle cx="11.500" cy="7.500" r="6" fill="none" stroke="#222" stroke-width="1.300"/><path d="M7.500 12L1 18.500" stroke="#222" stroke-width="1.400"/></svg>
            <span>Type here to search</span>
        </div>
        <div class="tb-apps">
            <span class="tb-app"><svg width="18" height="18" viewBox="0 0 20 20"><path d="M2 3h12v14H2z" fill="none" stroke="#fff" stroke-width="1.300"/><path d="M2 1h12M2 19h12" stroke="#fff"/><path d="M18 1v3M18 7v6M18 16v3" stroke="#fff" stroke-width="1.500"/></svg></span>
            <span class="tb-app"><svg width="26" height="24" viewBox="0 0 26 24"><path d="M1 3h9l3 3h12v17H1z" fill="#f3c550"/><path d="M1 9h24v14H1z" fill="#fbd667"/><path d="M8 23v-8h10v8h-3v-5h-4v5z" fill="#2f86d3"/><rect x="7" y="14" width="12" height="3" fill="#2f86d3"/></svg></span>
            <span class="tb-app"><svg width="28" height="30" viewBox="0 0 28 30"><path d="M9 8V6c0-6 10-6 10 0v2" fill="none" stroke="#bbb" stroke-width="1.500"/><path d="M1 8h26v21H1z" fill="#f5f5f5"/><path d="M9 12h5v5H9z" fill="#f25022"/><path d="M15 12h5v5h-5z" fill="#7fba00"/><path d="M9 18h5v5H9z" fill="#00a4ef"/><path d="M15 18h5v5h-5z" fill="#ffb900"/></svg></span>
            <span class="tb-app tb-run"><span class="cam cam-red">C</span></span>
            <span class="tb-app tb-run"><span class="cam cam-green">C</span></span>
            <span class="tb-app"><svg width="26" height="26" viewBox="0 0 26 26"><path fill-rule="evenodd" d="M1 13C2 5 8 1 14 1c7 0 11 5 11 12v3H10c0 6 8 7 14 3v5c-8 4-17 1-18-6-1-3 0-5 2-7-4 1-5 3-7 2zM10 11h8c0-5-7-5-8 0z" fill="#0f78d4"/></svg></span>
            <span class="tb-app tb-ai"><span class="ai-tile">Ai</span></span>
        </div>
        <div class="tray">
            <svg width="16" height="9" viewBox="0 0 16 9"><path d="M1 8l7-7 7 7" fill="none" stroke="#ddd" stroke-width="1.200"/></svg>
            <svg class="tray-batt" width="19" height="11" viewBox="0 0 19 11"><rect x="0.500" y="0.500" width="16" height="10" fill="none" stroke="#eee"/><rect x="2" y="2" width="11" height="7" fill="#eee"/><rect x="17" y="3.500" width="2" height="4" fill="#eee"/></svg>
            <svg class="tray-globe" width="20" height="20" viewBox="0 0 20 20"><circle cx="9.500" cy="9.500" r="8.500" fill="none" stroke="#eee"/><ellipse cx="9.500" cy="9.500" rx="4" ry="8.500" fill="none" stroke="#eee"/><path d="M1 9.500h17M2 5h15M2 14h15" stroke="#eee"/><circle cx="15.500" cy="15.500" r="3.800" fill="#18222e" stroke="#eee"/><path d="M13 13l5 5" stroke="#eee"/></svg>
            <span class="tray-lang">ENG</span>
            <div class="clock"><span>7:58 AM</span><span>13/05/2020</span></div>
            <span class="notify">
                <svg width="20" height="18" viewBox="0 0 20 18"><path d="M0 0h19v14H7l-3 4v-4H0z" fill="#fff"/><path d="M3 4h13M3 7h13M3 10h9" stroke="#333"/></svg>
                <b>1</b>
            </span>
        </div>
    </footer>
</div>
</body>
</html>
```

FILE: styles.css
```css
*{
    margin: 0;
    padding: 0;
    box-sizing: border-box;
}
html,body{
    width: 1280px;
    height: 720px;
    overflow: hidden;
}
body{
    font-family: "Noto Sans", "Open Sans", sans-serif;
    font-size: 11px;
    color: #c8c8c8;
    background: #444;
}
i{
    display: block;
    flex: none;
}
svg{
    flex: none;
}
.sprite{
    position: absolute;
    width: 0;
    height: 0;
}
.app{
    width: 1280px;
    height: 720px;
    display: flex;
    flex-direction: column;
}

/* top menu */
.menubar{
    height: 29px;
    flex: none;
    display: flex;
    align-items: center;
    background: #454545;
    border-bottom: 1px solid #2e2e2e;
}
.ai-logo{
    width: 44px;
    flex: none;
    padding-left: 8px;
    font: 20px/1 "Open Sans", sans-serif;
    color: #b5764a;
}
.menu{
    width: 381px;
    flex: none;
    display: flex;
}
.menu span{
    margin-right: 17px;
    color: #c4c4c4;
    font-size: 10.500px;
}
.vsep{
    width: 1px;
    background: #333;
}
.vsep-menu{
    height: 22px;
}
.badge{
    width: 14px;
    height: 15px;
    flex: none;
    margin-left: 15px;
    border: 1px solid #666;
    font-size: 9px;
    line-height: 13px;
    text-align: center;
    color: #6f6f6f;
    font-weight: 700;
}
.badge-st{
    width: 16px;
    margin-left: 18px;
    color: #ddd;
    background: #333;
    border-color: #aaa;
}
.layout-ic{
    margin-left: 21px;
}
.sync-ic{
    margin-left: 16px;
}
.essentials{
    margin-left: auto;
    font-size: 10.500px;
    color: #bdbdbd;
}
.caret{
    width: 0;
    height: 0;
    margin-left: 9px;
    border: 3px solid transparent;
    border-top: 3px solid #bbb;
    border-bottom: 0;
}
.vsep-ess{
    height: 22px;
    margin-left: 10px;
}
.search-box{
    width: 108px;
    height: 15px;
    flex: none;
    margin-left: 10px;
    background: #9c9c9c;
    border: 1px solid #3a3a3a;
    display: flex;
    align-items: center;
    padding-left: 2px;
}
.win-btns{
    width: 97px;
    height: 21px;
    flex: none;
    margin: -8px 1px 0 9px;
    display: flex;
    background: #3c3c3c;
    border-radius: 0 0 0 4px;
    border: 1px solid #2c2c2c;
    border-top: 0;
}
.win-btn{
    display: flex;
    align-items: center;
    justify-content: center;
    border-right: 1px solid #2f2f2f;
}
.win-min{
    width: 26px;
}
.win-min i{
    width: 9px;
    height: 2px;
    background: #ddd;
    margin-top: 4px;
}
.win-max{
    width: 27px;
}
.win-close{
    width: 43px;
    border: 0;
}

/* control bar */
.controlbar{
    height: 31px;
    flex: none;
    display: flex;
    align-items: center;
    background: #454545;
    border-bottom: 2px solid #2a2a2a;
    font-size: 10px;
}
.controlbar > span{
    flex: none;
}
.grip{
    width: 3px;
    height: 18px;
    margin-left: 4px;
    background: repeating-linear-gradient(#222 0 1px, transparent 1px 2px);
}
.cb-title{
    margin-left: 7px;
    width: 60px;
    letter-spacing: -0.3px;
    color: #d0d0d0;
    white-space: nowrap;
}
.vsep-1,.vsep-2,.vsep-3,.vsep-4,.vsep-5{
    height: 24px;
}
.vsep-1{
    margin-left: 8px;
}
.lbl{
    color: #c57b2c;
    text-decoration: underline dotted;
    text-underline-offset: 2px;
    white-space: nowrap;
}
.lbl-opacity{
    margin-left: 7px;
    width: 34px;
    letter-spacing: -0.4px;
}
.field{
    height: 17px;
    display: block;
    background: #a2a2a2;
    color: #2a2a2a;
    font-size: 10px;
    line-height: 17px;
    padding-left: 3px;
    letter-spacing: -0.2px;
    white-space: nowrap;
}
.f-opacity{
    width: 48px;
    margin-left: 7px;
}
.field-arrow{
    width: 14px;
    height: 17px;
    background: #3a3a3a;
    color: #ccc;
    text-align: center;
    line-height: 16px;
}
.vsep-2{
    margin-left: 8px;
}
.ic-style{
    margin-left: 8px;
}
.vsep-3{
    margin-left: 10px;
}
.lbl-corners{
    margin-left: 6px;
    width: 36px;
    letter-spacing: -0.4px;
}
.stepper{
    display: block;
    width: 15px;
    height: 17px;
    background: linear-gradient(#666 0 8px, #333 8px 9px, #666 9px);
    position: relative;
}
.stepper::before,.stepper::after{
    content: "";
    position: absolute;
    left: 4px;
    border: 3px solid transparent;
}
.stepper::before{
    top: 1px;
    border-top: 0;
    border-bottom: 4px solid #ddd;
}
.stepper::after{
    bottom: 1px;
    border-bottom: 0;
    border-top: 4px solid #ddd;
}
.st-corners{
    margin-left: 6px;
}
.f-corners{
    width: 47px;
}
.vsep-4{
    margin-left: 8px;
}
.ic-shape{
    margin-left: 11px;
}
.align-row{
    display: flex;
    align-items: center;
    flex: none;
    margin-left: 15px;
    position: relative;
}
.align-row svg{
    width: 14px;
    height: 16px;
    margin-right: 11px;
}
.align-row .gap-l{
    margin-left: 4px;
}
.align-row .gap-m{
    margin-left: 26px;
}
.f-overlay{
    position: absolute;
    left: 139px;
    top: 0;
    width: 44px;
    height: 15px;
    line-height: 15px;
    background: #a0a0a0;
}
.vsep-5{
    margin-left: -1px;
}
.ic-ref{
    margin-left: 5px;
}
.lbl-x,.lbl-y,.lbl-w,.lbl-h{
    font-weight: 700;
}
.lbl-x{
    margin-left: 10px;
    width: 14px;
}
.f-x{
    width: 55px;
}
.lbl-y{
    margin-left: 9px;
    width: 13px;
}
.f-y{
    width: 54px;
}
.lbl-w{
    margin-left: 9px;
    width: 18px;
}
.f-w{
    width: 53px;
}
.ic-link{
    margin-left: 11px;
}
.lbl-h{
    margin-left: 12px;
    width: 17px;
}
.f-h{
    width: 53px;
}
.ic-cbmenu{
    margin-left: 114px;
}

/* body of the window */
.main{
    flex: 1;
    min-height: 0;
    display: flex;
}
.tools{
    width: 69px;
    flex: none;
    background: #474747;
    border-right: 1px solid #333;
}
.tools-head{
    height: 12px;
    font-size: 6px;
    line-height: 12px;
    padding-left: 3px;
    color: #bbb;
    background: #3a3a3a;
}
.tools-grip{
    height: 14px;
    background: repeating-linear-gradient(90deg, #222 0 1px, transparent 1px 2px) 20px 3px / 28px 4px no-repeat;
}
.tool-grp{
    display: grid;
    grid-template-columns: 28px 28px;
    grid-auto-rows: 23px;
    justify-items: center;
    align-items: center;
    padding-left: 6px;
    box-shadow: 0 1px 0 #5a5a5a;
    margin-bottom: 1px;
}
.tool-grp svg{
    width: 18px;
    height: 18px;
}
.tool-grp .on{
    width: 28px;
    height: 23px;
    padding: 3px 5px;
    background: #333;
}
.type-tool{
    font: 20px/23px "Liberation Serif", serif;
    color: #c8c8c8;
}
.colors{
    height: 52px;
    margin-top: 2px;
    position: relative;
}
.fill-box{
    position: absolute;
    left: 6px;
    top: 0;
    width: 33px;
    height: 33px;
    background: #fff;
    border: 1px solid #888;
}
.stroke-box{
    position: absolute;
    left: 23px;
    top: 17px;
    width: 33px;
    height: 33px;
    background: #000;
    border: 1px solid #aaa;
    padding: 5px;
}
.stroke-box i{
    width: 21px;
    height: 21px;
    background: #474747;
    border: 1px solid #ccc;
    outline: 1px solid #000;
}
.swap{
    position: absolute;
    left: 46px;
    top: 0;
}
.defaults{
    position: absolute;
    left: 6px;
    top: 40px;
}
.mode-row{
    width: 55px;
    height: 17px;
    margin: 5px 0 0 7px;
    background: #333;
    display: flex;
    align-items: center;
    justify-content: space-around;
}
.mode{
    width: 12px;
    height: 12px;
}
.mode-color{
    background: #fff;
}
.mode-grad{
    background: linear-gradient(90deg, #fff, #222);
}
.draw-row{
    width: 55px;
    height: 15px;
    margin: 7px 0 0 7px;
    display: flex;
}
.draw-on{
    width: 17px;
    background: #303030;
    display: flex;
    align-items: center;
    justify-content: center;
}
.draw-off{
    flex: 1;
    background: #5a5a5a;
    display: flex;
    align-items: center;
    justify-content: space-around;
}
.screen-ic{
    display: block;
    margin: 8px 0 0 21px;
}

/* document */
.doc{
    flex: 1;
    min-width: 0;
    display: flex;
    flex-direction: column;
}
.tabstrip{
    height: 20px;
    flex: none;
    background: #333;
}
.tab{
    width: 215px;
    height: 20px;
    display: flex;
    align-items: center;
    background: #454545;
    padding-left: 9px;
    font-size: 10.500px;
    color: #c8c8c8;
    white-space: nowrap;
}
.tab b{
    margin-left: 14px;
    font-weight: 400;
    font-size: 12px;
}
.doc-body{
    flex: 1;
    min-height: 0;
    display: flex;
}
.canvas{
    flex: 1;
    background: #6b6b6b;
    position: relative;
    overflow: hidden;
}
.artboard{
    width: 576px;
    height: 100%;
    margin-left: 292px;
    background: #fff;
    border-left: 1px solid #1e1e1e;
    border-right: 1px solid #2a2a2a;
}
.shapes{
    display: block;
}
.shapes ellipse,.shapes path{
    fill: none;
}
.ol{
    stroke: #46598f;
    stroke-width: 1.200;
}
.lt{
    stroke: #7592e4;
    stroke-width: 1.100;
}
.dk{
    stroke: #2b3760;
    stroke-width: 1.200;
}
.pts{
    fill: #4a74e2;
}
.w-ring{
    fill: none;
    stroke: #7d9bec;
    stroke-width: 1;
}
.w-dot{
    fill: #4a74e2;
}
.shapes .cursor{
    fill: #fff;
    stroke: #000;
    stroke-width: 1.300;
}

/* pathfinder panel */
.panel{
    position: absolute;
    left: 808px;
    top: 120px;
    width: 218px;
    height: 123px;
    background: #4e4e4e;
    border: 1px solid #2a2a2a;
}
.panel-top{
    height: 12px;
    background: #3a3a3a;
    display: flex;
    justify-content: flex-end;
    align-items: center;
    font-size: 6px;
    color: #ccc;
    padding-right: 4px;
}
.panel-top b{
    margin-left: 8px;
    font-size: 12px;
    font-weight: 400;
}
.panel-tabs{
    height: 19px;
    display: flex;
    align-items: center;
    background: #383838;
    font-size: 9px;
    font-weight: 600;
    color: #7f7f7f;
}
.ptab{
    height: 19px;
    line-height: 18px;
    text-align: center;
    background: #404040;
    border-right: 1px solid #333;
}
.ptab-a{
    width: 59px;
}
.ptab-b{
    width: 38px;
}
.ptab-on{
    width: 60px;
    background: #4e4e4e;
    color: #d8d8d8;
    border: 0;
}
.ptab-menu{
    margin-left: auto;
    margin-right: 4px;
}
.panel-body{
    padding: 1px 5px 0;
}
.p-title{
    font-size: 9px;
    font-weight: 500;
    color: #d6d6d6;
    line-height: 14px;
    margin-top: 1px;
}
.p-title2{
    margin-top: 9px;
}
.modes,.finders{
    display: flex;
    align-items: center;
}
.modes{
    height: 15px;
    margin-top: 6px;
}
.modes svg{
    width: 14px;
    height: 14px;
    margin-left: 5px;
    margin-right: 16px;
}
.expand{
    width: 64px;
    height: 15px;
    margin-left: 1px;
    border: 1px solid #3a3a3a;
    text-align: center;
    font-size: 9px;
    line-height: 13px;
    color: #787878;
}
.finders{
    margin-top: 5px;
    height: 15px;
}
.finders svg{
    width: 16px;
    height: 14px;
    margin-left: 7px;
    margin-right: 12px;
}

/* right scrollbar + status */
.vscroll{
    width: 17px;
    flex: none;
    background: #333;
    display: flex;
    flex-direction: column;
    align-items: center;
    padding-top: 5px;
}
.arr-up{
    width: 0;
    height: 0;
    border: 5px solid transparent;
    border-top: 0;
    border-bottom: 6px solid #eee;
}
.vthumb{
    width: 14px;
    height: 14px;
    align-self: flex-start;
    background: #9a9a9a;
    margin-top: 271px;
}
.arr-down{
    width: 0;
    height: 0;
    margin-top: auto;
    margin-bottom: 5px;
    border: 5px solid transparent;
    border-bottom: 0;
    border-top: 6px solid #eee;
}
.statusbar{
    height: 17px;
    flex: none;
    display: flex;
    align-items: center;
    background: #454545;
    font-size: 9px;
    color: #d0d0d0;
}
.statusbar > span{
    flex: none;
}
.st-rot{
    margin-left: 7px;
}
.st-share{
    margin-left: 9px;
}
.f-zoom{
    width: 47px;
    height: 15px;
    margin-left: 12px;
    line-height: 15px;
    font-size: 9px;
}
.drop{
    display: block;
    width: 14px;
    height: 15px;
    background: #555;
    position: relative;
}
.drop::after{
    content: "";
    position: absolute;
    left: 3px;
    top: 5px;
    border: 4px solid transparent;
    border-top: 5px solid #ccc;
    border-bottom: 0;
}
.nav{
    color: #6a6a6a;
    font-size: 7px;
    width: 12px;
    white-space: nowrap;
}
.nav-a{
    margin-left: 10px;
    width: 18px;
}
.f-page{
    width: 39px;
    height: 15px;
    margin-left: 3px;
    line-height: 15px;
    font-size: 9px;
}
.nav-c{
    margin-left: 9px;
    width: 15px;
}
.nav-d{
    width: 18px;
}
.st-text{
    margin-left: 58px;
    width: 135px;
    white-space: nowrap;
}
.st-arrow{
    width: 8px;
    color: #ccc;
}
.hscroll{
    flex: 1;
    height: 17px;
    display: flex;
    align-items: center;
    background: #333;
    padding-left: 5px;
    color: #e8e8e8;
}
.h-left{
    width: 337px;
    flex: none;
}
.hthumb{
    width: 14px;
    height: 17px;
    background: #9a9a9a;
}
.h-right{
    margin-left: auto;
    margin-right: 4px;
}
.corner{
    width: 17px;
    height: 17px;
    background: #3f3f3f;
}

/* docked panels */
.dock{
    width: 34px;
    flex: none;
    background: #454545;
    border-left: 1px solid #2c2c2c;
}
.dock-head{
    height: 12px;
    font-size: 6px;
    line-height: 12px;
    text-align: right;
    padding-right: 2px;
    color: #ccc;
    background: #363636;
}
.dock-grp{
    display: flex;
    flex-direction: column;
    align-items: center;
    border-bottom: 1px solid #2c2c2c;
    padding-bottom: 5px;
}
.dock-grip{
    width: 18px;
    height: 4px;
    margin: 3px 0 6px;
    background: repeating-linear-gradient(90deg, #222 0 1px, transparent 1px 2px);
}
.dock-grp svg{
    width: 20px;
    height: 20px;
    margin-bottom: 6px;
}
.dock-grp svg:last-child{
    margin-bottom: 0;
}

/* windows taskbar */
.taskbar{
    height: 46px;
    flex: none;
    display: flex;
    align-items: center;
    background: #18222e;
    color: #eee;
}
.win-logo{
    margin-left: 18px;
}
.tb-search{
    width: 403px;
    height: 46px;
    flex: none;
    margin-left: 19px;
    background: #f2f2f2;
    display: flex;
    align-items: center;
    padding-left: 14px;
    border-bottom: 1px solid #bbb;
    color: #333;
    font: 16.800px "Open Sans", sans-serif;
}
.tb-search span{
    margin-left: 13px;
}
.tb-apps{
    display: flex;
    height: 46px;
    flex: none;
}
.tb-app{
    width: 58.300px;
    height: 46px;
    display: flex;
    align-items: center;
    justify-content: center;
}
.tb-run,.tb-ai{
    box-shadow: inset 0 -3px 0 #76b9ed;
}
.tb-run{
    clip-path: inset(0 5px);
}
.tb-ai{
    background: #4a5058;
}
.cam{
    width: 28px;
    height: 30px;
    border-radius: 3px;
    text-align: center;
    color: #fff;
    font: 700 28px/30px "Liberation Sans", sans-serif;
}
.cam-red{
    background: #ee5b43;
}
.cam-green{
    background: #5fa213;
}
.ai-tile{
    width: 26px;
    height: 28px;
    background: #2a1505;
    border: 2px solid #e4761b;
    color: #e4761b;
    text-align: center;
    font: 13px/24px "Open Sans", sans-serif;
}
.tray{
    display: flex;
    align-items: center;
    margin-left: 144px;
    flex: 1;
}
.tray-batt{
    margin-left: 12px;
}
.tray-globe{
    margin-left: 9px;
}
.tray-lang{
    margin-left: 12px;
    font: 13px "Open Sans", sans-serif;
}
.clock{
    width: 72px;
    margin-left: 13px;
    display: flex;
    flex-direction: column;
    align-items: center;
    font: 14px/21px "Open Sans", sans-serif;
    white-space: nowrap;
}
.notify{
    margin-left: 23px;
    position: relative;
}
.notify svg{
    display: block;
}
.notify b{
    position: absolute;
    left: 10px;
    top: 5px;
    width: 18px;
    height: 18px;
    border: 1px solid #aaa;
    border-radius: 50%;
    background: #18222e;
    text-align: center;
    font: 11px/16px "Open Sans", sans-serif;
}
```
